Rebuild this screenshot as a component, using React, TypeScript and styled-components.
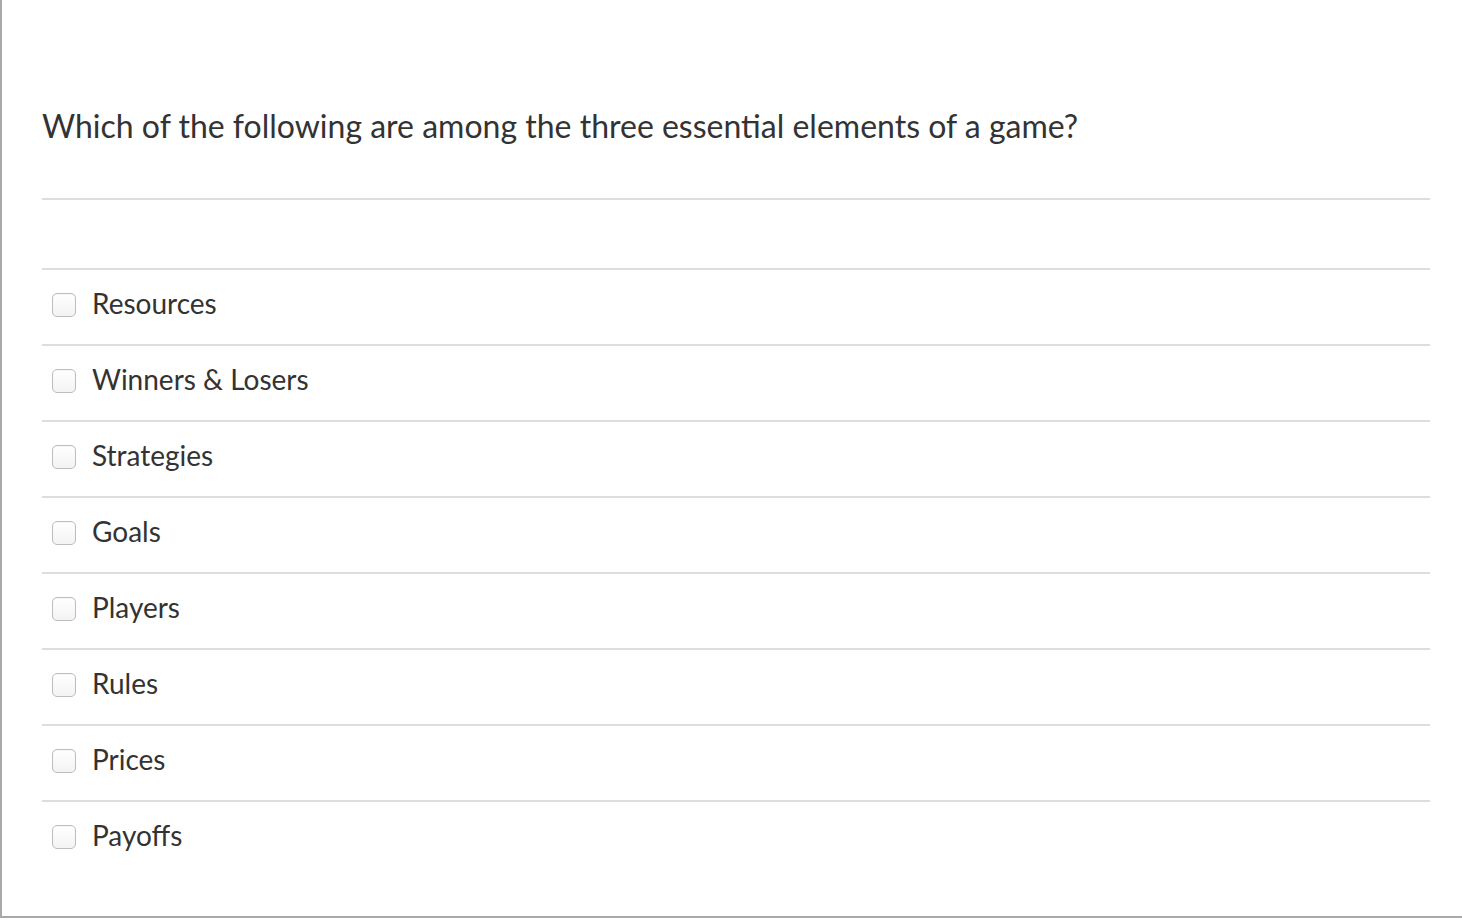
import React from "react";
import { createGlobalStyle, styled } from "styled-components";

const GlobalStyle = createGlobalStyle`
  html, body {
    margin: 0;
    padding: 0;
    background: #ffffff;
  }
  body {
    font-family: Lato, "Liberation Sans", sans-serif;
    color: #333333;
  }
`;

const Frame = styled.div`
  box-sizing: border-box;
  width: 1462px;
  height: 918px;
  border-left: 2px solid #a9a9a9;
  border-bottom: 2px solid #a9a9a9;
  padding: 107px 32px 0 40px;
  background: #ffffff;
`;

const Question = styled.div`
  font-size: 32px;
  line-height: 38px;
  color: #333333;
  margin: 0 0 53px 0;
`;

const Rule = styled.div`
  height: 2px;
  background: #dddddd;
`;

const Spacer = styled.div`
  height: 68px;
`;

const AnswerList = styled.ul`
  list-style: none;
  margin: 0;
  padding: 0;
`;

const Answer = styled.li`
  display: flex;
  align-items: center;
  height: 74px;
  border-top: 2px solid #dddddd;
`;

const Box = styled.span`
  box-sizing: border-box;
  width: 24px;
  height: 24px;
  margin: 0 16px 4px 10px;
  border: 1px solid #bdbdbd;
  border-radius: 5px;
  background: linear-gradient(#ffffff, #f3f3f3);
  box-shadow: inset 0 1px 1px rgba(0, 0, 0, 0.04);
  flex-shrink: 0;
`;

const Label = styled.span`
  font-size: 28px;
  line-height: 34px;
  color: #333333;
  margin-top: -8px;
`;

const answers = [
  "Resources",
  "Winners & Losers",
  "Strategies",
  "Goals",
  "Players",
  "Rules",
  "Prices",
  "Payoffs",
];

export default function App() {
  return (
    <>
      <GlobalStyle />
      <Frame>
        <Question>
          Which of the following are among the three essential elements of a game?
        </Question>
        <Rule />
        <Spacer />
        <AnswerList>
          {answers.map((a) => (
            <Answer key={a}>
              <Box />
              <Label>{a}</Label>
            </Answer>
          ))}
        </AnswerList>
      </Frame>
    </>
  );
}
